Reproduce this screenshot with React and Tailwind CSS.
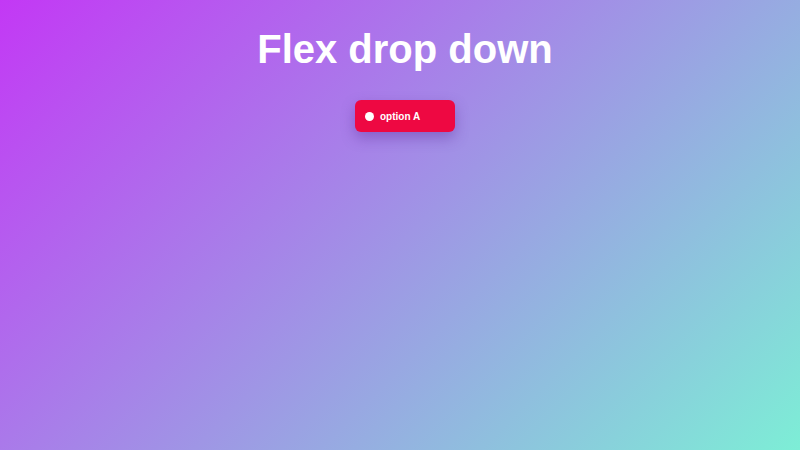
export default function App() {
  return (
    <div
      className="min-h-screen w-full bg-[linear-gradient(135deg,#c338f5,#7deed6)] flex flex-col items-center pl-[10px]"
      style={{ fontFamily: '"Liberation Sans", Arial, sans-serif' }}
    >
      <h1 className="pt-[29px] text-[40px] leading-none font-bold text-white">Flex drop down</h1>

      {/* dropdown trigger */}
      <button className="mt-[31px] w-[100px] h-[32px] rounded-md bg-[#ee0842] flex items-center pl-[10px] gap-[6px] shadow-[0_6px_14px_rgba(80,30,140,0.35)] cursor-pointer">
        <span className="w-[9px] h-[9px] rounded-full bg-white" />
        <span className="text-[10px] font-bold text-white">option A</span>
      </button>
    </div>
  );
}
